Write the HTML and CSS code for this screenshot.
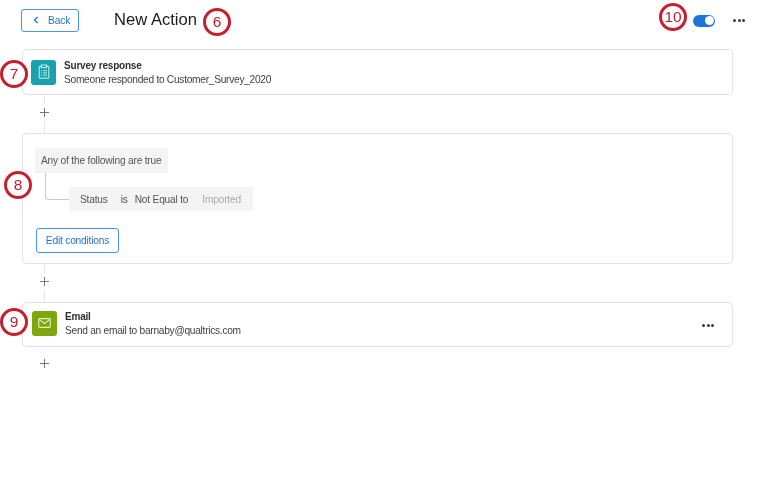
FILE: index.html
```html
<!DOCTYPE html>
<html lang="en">
<head>
<meta charset="utf-8">
<title>New Action</title>
<link rel="stylesheet" href="styles.css">
</head>
<body>
<div class="page">
  <header class="topbar">
    <button class="btn back-btn">
      <svg class="chev" viewBox="0 0 6 8" width="6" height="8"><path d="M4.5 1 1.5 4l3 3" fill="none" stroke="#1f73d8" stroke-width="1.4"/></svg>
      <span>Back</span>
    </button>
    <h1 class="title">New Action</h1>
    <div class="top-right">
      <span class="toggle"><span class="knob"></span></span>
      <span class="dots"><i></i><i></i><i></i></span>
    </div>
  </header>

  <section class="card task-card first">
    <span class="icon teal">
      <svg viewBox="0 0 16 18" width="14" height="16" fill="none" stroke="#d8f1f1" stroke-width="1.1"><path d="M5 2.5H2.5v13.5h11V2.5H11"/><rect x="5" y="1" width="6" height="3"/><path d="M4.8 7.5h1M7.2 7.5h4M4.8 10h1M7.2 10h4M4.8 12.6h1M7.2 12.6h4"/></svg>
    </span>
    <div class="task-text">
      <div class="task-name">Survey response</div>
      <div class="task-desc">Someone responded to Customer_Survey_2020</div>
    </div>
  </section>

  <div class="connector"><span class="plus"></span></div>

  <section class="card cond-card">
    <div class="cond-head">Any of the following are true</div>
    <div class="cond-row">
      <span class="elbow"></span>
      <div class="cond-pill">
        <span class="c-status">Status</span>
        <span class="c-is">is</span>
        <span class="c-op">Not Equal to</span>
        <span class="c-val">Imported</span>
      </div>
    </div>
    <button class="btn edit-btn">Edit conditions</button>
  </section>

  <div class="connector"><span class="plus"></span></div>

  <section class="card task-card last">
    <span class="icon green">
      <svg viewBox="0 0 14 11" width="13" height="10" fill="none" stroke="#e6f0c8" stroke-width="1.2"><rect x=".7" y=".7" width="12.6" height="9.6" rx="1"/><path d="M1 1.5 7 6l6-4.5"/></svg>
    </span>
    <div class="task-text">
      <div class="task-name">Email</div>
      <div class="task-desc">Send an email to barnaby@qualtrics.com</div>
    </div>
    <span class="dots card-dots"><i></i><i></i><i></i></span>
  </section>

  <div class="connector end"><span class="plus"></span></div>

  <span class="callout c6">6</span>
  <span class="callout c7">7</span>
  <span class="callout c8">8</span>
  <span class="callout c9">9</span>
  <span class="callout c10">10</span>
</div>
</body>
</html>
```

FILE: styles.css
```css
* { box-sizing: border-box; }
html, body { margin: 0; height: 100%; background: #fff; overflow: hidden; }
body { font-family: "Liberation Sans", Arial, sans-serif; color: #3b3b3f; }
.page { position: relative; width: 768px; height: 477px; padding: 0 35px 0 22px; filter: blur(.3px); }

.topbar { display: flex; align-items: center; height: 49px; padding-bottom: 10px; margin-left: -1px; margin-right: -12px; }
.btn { display: inline-flex; align-items: center; font-family: inherit; background: #fff; color: #1f73d8; border: 1px solid #4a93e6; border-radius: 3px; padding: 0; cursor: pointer; white-space: nowrap; }
.back-btn { width: 58px; height: 23px; padding-left: 11px; gap: 9px; font-size: 10.2px; letter-spacing: -.1px; font-weight: 400; margin-top: 1px; }
.chev { display: block; }
.title { margin: 0 0 0 35px; font-size: 16.6px; font-weight: 400; color: #1c1c1f; }
.top-right { display: flex; align-items: center; gap: 18px; margin-left: auto; margin-top: 2px; }
.toggle { display: flex; align-items: center; justify-content: flex-end; width: 22px; height: 12px; border-radius: 6px; background: #1f73d8; padding: 1px; }
.knob { width: 9px; height: 9px; border-radius: 50%; background: #fff; }
.dots { display: flex; gap: 1.5px; }
.dots i { width: 3px; height: 3px; border-radius: 50%; background: #3b3b3f; }

.card { background: #fff; border: 1px solid #e3e3e6; border-radius: 5px; box-shadow: 0 0 1px #eee; }
.task-card { display: flex; align-items: center; }
.task-card.first { height: 46px; padding-left: 8px; }
.task-card.first .task-text { margin-top: 2px; }
.task-card.last { height: 45px; padding-left: 9px; padding-right: 18px; }
.task-card.last .icon { margin-top: -3px; }
.task-card.last .task-text { margin-top: -2px; }
.icon { display: flex; align-items: center; justify-content: center; width: 25px; height: 25px; border-radius: 3px; flex: none; }
.teal { background: #17a3ab; }
.green { background: #7da70d; }
.task-text { margin-left: 8px; white-space: nowrap; }
.task-name { font-size: 10px; letter-spacing: -.2px; font-weight: 700; line-height: 14px; color: #2f2f33; }
.task-desc { font-size: 10.2px; letter-spacing: -.28px; line-height: 14px; color: #3f3f44; }
.card-dots { margin-left: auto; margin-top: 1px; }

.connector { position: relative; height: 38px; display: flex; align-items: center; padding-left: 18px; padding-bottom: 4px; }
.connector::before { content: ""; position: absolute; left: 22px; top: 0; bottom: 0; width: 1px; background: #e6e6e8; }
.connector.end { height: 36px; }
.connector.end::before { display: none; }
.plus { position: relative; width: 9px; height: 9px; background: linear-gradient(#77777c, #77777c) center / 100% 1px no-repeat, linear-gradient(#77777c, #77777c) center / 1px 100% no-repeat, #fff; box-shadow: 0 0 0 4px #fff; }

.cond-card { height: 131px; padding: 14px 12px 0; }
.cond-head { display: inline-block; vertical-align: top; height: 25px; line-height: 25px; padding: 0 6px; background: #f4f4f5; font-size: 10.2px; letter-spacing: -.2px; color: #55555a; white-space: nowrap; width: 133px; }
.cond-row { display: flex; height: 38px; }
.elbow { width: 24px; height: 27px; margin-left: 10px; border-left: 1px solid #c9c9cd; border-bottom: 1px solid #c9c9cd; border-bottom-left-radius: 4px; }
.cond-pill { display: flex; align-items: center; align-self: flex-end; height: 24px; width: 184px; padding: 0 11px; background: #f4f4f5; font-size: 10.2px; letter-spacing: -.2px; color: #55555a; white-space: nowrap; }
.c-is { margin-left: 13px; }
.c-op { margin-left: 7px; }
.c-val { margin-left: 14px; color: #ababaf; }
.edit-btn { display: flex; justify-content: center; width: 83px; height: 25px; margin: 17px 0 0 1px; font-size: 10.2px; letter-spacing: -.2px; }

.callout { position: absolute; display: flex; align-items: center; justify-content: center; width: 28px; height: 28px; border: 3px solid #c4202f; border-radius: 50%; background: #fff; color: #c4202f; font-size: 15.5px; font-weight: 400; }
.c6 { left: 203px; top: 8px; }
.c7 { left: 0; top: 60px; }
.c8 { left: 4px; top: 171px; }
.c9 { left: 0; top: 308px; }
.c10 { left: 659px; top: 3px; }
```
